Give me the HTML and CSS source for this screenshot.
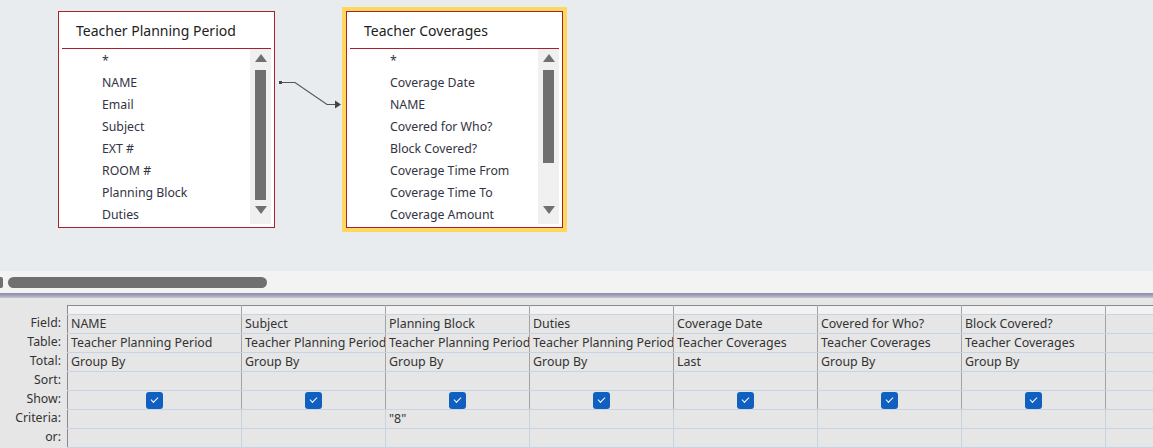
FILE: index.html
```html
<!DOCTYPE html>
<html lang="en">
<head>
  <meta charset="UTF-8">
  <title>Query Design</title>
  <link rel="stylesheet" href="styles.css">
</head>
<body>
  <div class="canvas">
    <div class="field-list" id="tpp">
      <div class="fl-title">Teacher Planning Period</div>
      <div class="fl-body">
        <ul class="fl-items">
          <li>*</li>
          <li>NAME</li>
          <li>Email</li>
          <li>Subject</li>
          <li>EXT #</li>
          <li>ROOM #</li>
          <li>Planning Block</li>
          <li>Duties</li>
        </ul>
        <div class="vscroll">
          <span class="arrow up"></span>
          <div class="vtrack"><div class="vthumb long"></div></div>
          <span class="arrow down"></span>
        </div>
      </div>
    </div>

    <svg class="join" width="70" height="30" viewBox="0 0 70 30">
      <rect x="0" y="1" width="3" height="3" fill="#444"/>
      <polyline points="2,2.5 16,2.5 48,24.5 57,24.5" fill="none" stroke="#555" stroke-width="1.2"/>
      <polygon points="56,20.5 62,24.5 56,28.5" fill="#444"/>
    </svg>

    <div class="field-list selected" id="tc">
      <div class="fl-title">Teacher Coverages</div>
      <div class="fl-body">
        <ul class="fl-items">
          <li>*</li>
          <li>Coverage Date</li>
          <li>NAME</li>
          <li>Covered for Who?</li>
          <li>Block Covered?</li>
          <li>Coverage Time From</li>
          <li>Coverage Time To</li>
          <li>Coverage Amount</li>
        </ul>
        <div class="vscroll">
          <span class="arrow up"></span>
          <div class="vtrack"><div class="vthumb short"></div></div>
          <span class="arrow down"></span>
        </div>
      </div>
    </div>
  </div>

  <div class="hscroll">
    <span class="hcap"></span>
    <div class="hthumb"></div>
  </div>
  <div class="splitter"></div>

  <div class="design">
    <div class="labels">
      <div class="lbl head"></div>
      <div class="lbl">Field:</div>
      <div class="lbl">Table:</div>
      <div class="lbl">Total:</div>
      <div class="lbl">Sort:</div>
      <div class="lbl">Show:</div>
      <div class="lbl">Criteria:</div>
      <div class="lbl">or:</div>
    </div>
    <table class="qbe">
      <colgroup>
        <col class="c-first">
        <col class="c"><col class="c"><col class="c"><col class="c"><col class="c"><col class="c"><col class="c">
      </colgroup>
      <tr class="sel">
        <td></td><td></td><td></td><td></td><td></td><td></td><td></td><td></td>
      </tr>
      <tr>
        <td>NAME</td><td>Subject</td><td>Planning Block</td><td>Duties</td><td>Coverage Date</td><td>Covered for Who?</td><td>Block Covered?</td><td></td>
      </tr>
      <tr>
        <td>Teacher Planning Period</td><td>Teacher Planning Period</td><td>Teacher Planning Period</td><td>Teacher Planning Period</td><td>Teacher Coverages</td><td>Teacher Coverages</td><td>Teacher Coverages</td><td></td>
      </tr>
      <tr>
        <td>Group By</td><td>Group By</td><td>Group By</td><td>Group By</td><td>Last</td><td>Group By</td><td>Group By</td><td></td>
      </tr>
      <tr>
        <td></td><td></td><td></td><td></td><td></td><td></td><td></td><td></td>
      </tr>
      <tr class="show">
        <td><span class="chk"></span></td><td><span class="chk"></span></td><td><span class="chk"></span></td><td><span class="chk"></span></td><td><span class="chk"></span></td><td><span class="chk"></span></td><td><span class="chk"></span></td><td></td>
      </tr>
      <tr class="soft">
        <td></td><td></td><td>"8"</td><td></td><td></td><td></td><td></td><td></td>
      </tr>
      <tr class="soft">
        <td></td><td></td><td></td><td></td><td></td><td></td><td></td><td></td>
      </tr>
    </table>
  </div>
</body>
</html>
```

FILE: styles.css
```css
* {
  box-sizing: border-box;
}

body {
  margin: 0;
  width: 1153px;
  height: 448px;
  overflow: hidden;
  font-family: 'Noto Sans', 'Open Sans', sans-serif;
  font-size: 12px;
  color: #333333;
  background: #e6e6e6;
}

/* table diagram area */
.canvas {
  position: relative;
  height: 271px;
  background: #e9ecef;
}

.field-list {
  position: absolute;
  top: 11px;
  width: 217px;
  height: 217px;
  background: #ffffff;
  border: 1px solid #a8202e;
}

#tpp {
  left: 58px;
}

#tc {
  left: 346px;
}

.field-list.selected {
  outline: 4px solid #fcd95c;
}

.fl-title {
  height: 37px;
  margin: 0 3px;
  padding: 9px 0 0 14px;
  font-size: 14px;
  color: #222222;
  border-bottom: 1px solid #a8202e;
}

.fl-body {
  display: flex;
  height: 175px;
  margin-right: 3px;
  overflow: hidden;
}

.fl-items {
  flex: 1;
  list-style: none;
  margin: 0;
  padding: 1px 0 0 43px;
}

.fl-items li {
  height: 22px;
  line-height: 22px;
  font-size: 12.3px;
  color: #333344;
  white-space: nowrap;
}

.vscroll {
  width: 21px;
  height: 175px;
  background: #f0f0f0;
  display: flex;
  flex-direction: column;
  align-items: center;
}

.arrow {
  width: 0;
  height: 0;
  border-left: 6px solid transparent;
  border-right: 6px solid transparent;
}

.arrow.up {
  margin-top: 5px;
  border-bottom: 8px solid #707070;
}

.arrow.down {
  margin-bottom: 10px;
  border-top: 8px solid #707070;
}

.vtrack {
  flex: 1;
  width: 11px;
  padding-top: 8px;
}

.vthumb {
  width: 11px;
  background: #707070;
}

.vthumb.long {
  height: 130px;
}

.vthumb.short {
  height: 93px;
}

.join {
  position: absolute;
  left: 279px;
  top: 80px;
}

/* horizontal scroll bar */
.hscroll {
  display: flex;
  align-items: center;
  height: 22px;
  background: #f3f3f3;
}

.hcap {
  width: 3px;
  height: 11px;
  background: #707070;
  border-radius: 0 2px 2px 0;
  margin-right: 5px;
}

.hthumb {
  width: 259px;
  height: 11px;
  background: #707070;
  border-radius: 6px;
}

.splitter {
  height: 5px;
  background: linear-gradient(to bottom, #8b89a8, #a9a8c0 60%, #c7c6d6);
}

/* query grid */
.design {
  display: flex;
  padding-top: 7px;
  overflow: hidden;
}

.labels {
  flex: 0 0 67px;
  padding-right: 6px;
}

.lbl {
  height: 19px;
  line-height: 17px;
  text-align: right;
  font-size: 12.3px;
  color: #333333;
}

.lbl.head {
  height: 9px;
}

.qbe {
  flex: 0 0 auto;
  width: 1182px;
  border-collapse: collapse;
  table-layout: fixed;
  border-top: 1px solid #8a8a8a;
  border-left: 1px solid #8a8a8a;
}

.c-first {
  width: 174px;
}

.c {
  width: 144px;
}

.qbe td {
  height: 19px;
  padding: 0 0 1px 3px;
  border-right: 1px solid #a3a3a3;
  border-bottom: 1px solid #c9d4e3;
  white-space: nowrap;
  overflow: hidden;
  line-height: 17px;
  font-size: 12.4px;
  color: #333333;
}

.qbe tr.sel td {
  height: 9px;
  padding: 0;
  background: #f2f2f2;
}

.qbe tr.soft td {
  border-right-color: #c9d4e3;
}

.qbe tr.show td {
  text-align: center;
  padding: 0;
}

.chk {
  display: inline-block;
  width: 17px;
  height: 17px;
  margin-top: 1px;
  vertical-align: top;
  background: #1160c0;
  border-radius: 3px;
  position: relative;
}

.chk::after {
  content: "";
  position: absolute;
  left: 5px;
  top: 5px;
  width: 6px;
  height: 3px;
  border-left: 1.5px solid #ffffff;
  border-bottom: 1.5px solid #ffffff;
  transform: rotate(-45deg);
}
```
